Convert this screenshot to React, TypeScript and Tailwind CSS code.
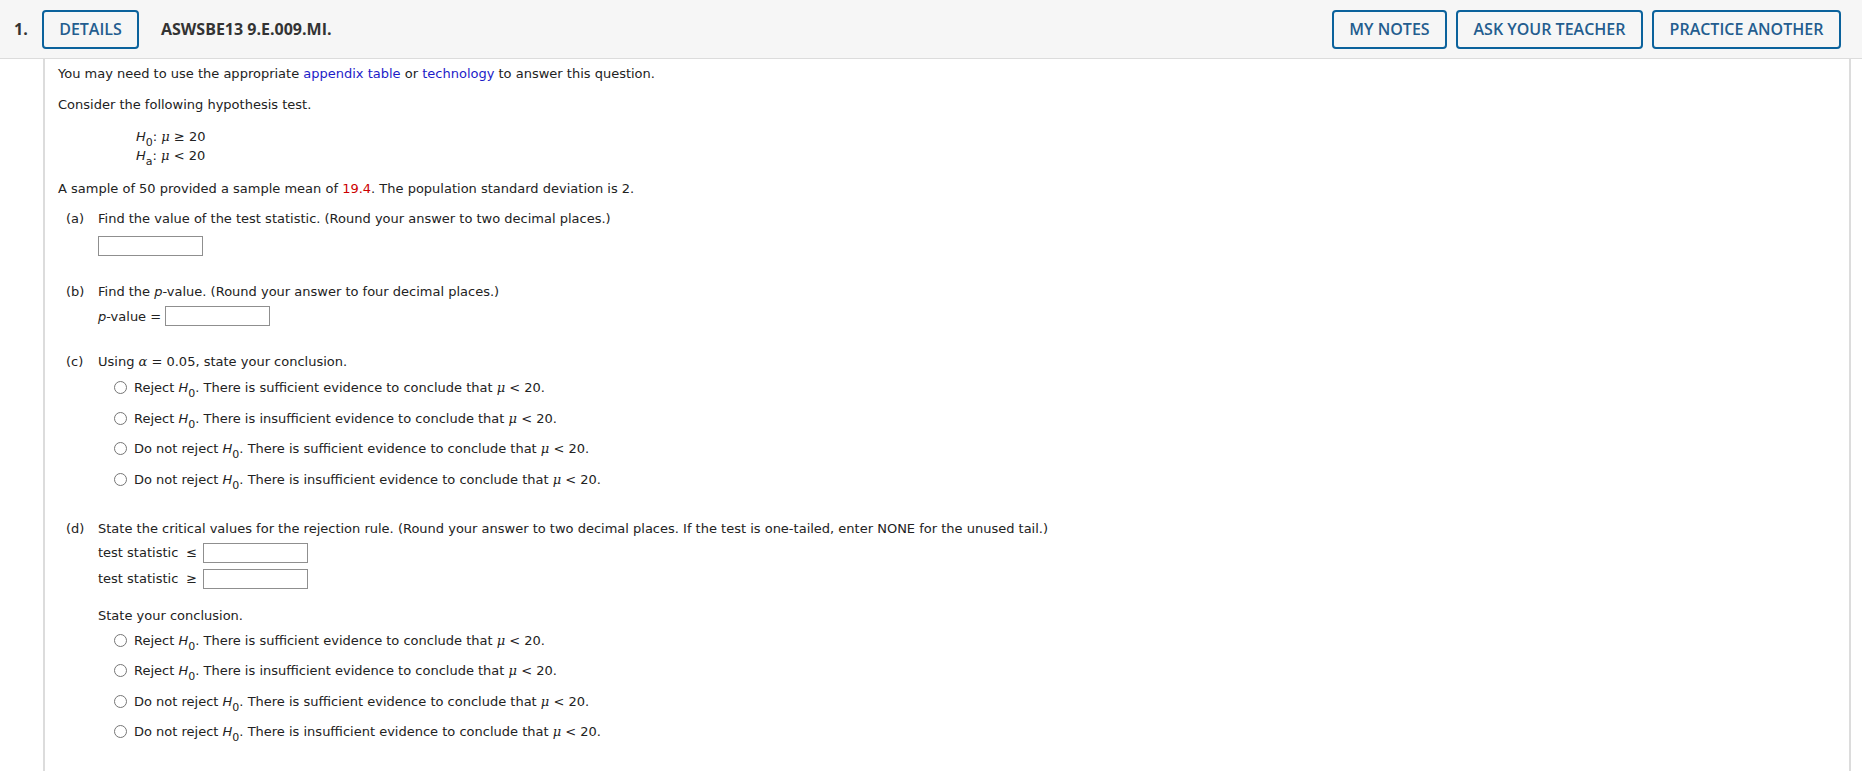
import React from 'react';

const H = ({ sub }: { sub: string }) => (
  <span>
    <span className="italic">H</span>
    <span className="relative top-[5px] text-[11px] leading-none">{sub}</span>
  </span>
);

const Mu = () => <span className="italic font-['DejaVu_Serif',serif]">μ</span>;

function Choice({ lead, rest }: { lead: string; rest: string }) {
  return (
    <label className="flex h-[19px] items-center">
      <span className="ml-[56px] mr-[7px] h-[13px] w-[13px] rounded-full border border-[#767676] bg-white" />
      <span>
        {lead} <H sub="0" />. {rest} <Mu /> &lt; 20.
      </span>
    </label>
  );
}

function Choices() {
  return (
    <div className="flex flex-col gap-[11.5px]">
      <Choice lead="Reject" rest="There is sufficient evidence to conclude that" />
      <Choice lead="Reject" rest="There is insufficient evidence to conclude that" />
      <Choice lead="Do not reject" rest="There is sufficient evidence to conclude that" />
      <Choice lead="Do not reject" rest="There is insufficient evidence to conclude that" />
    </div>
  );
}

const Box = () => <span className="inline-block h-[20px] w-[105px] border border-[#8f8f8f] bg-white align-middle" />;

const headBtn =
  "h-[39px] whitespace-nowrap rounded-[4px] border-2 border-[#0b629c] bg-[#f6f6f6] px-0 text-[16px] font-semibold text-[#245d8f]";

export default function App() {
  return (
    <div className="min-h-[771px] bg-white text-[#222]">
      {/* header bar */}
      <div className="flex h-[59px] items-center border-b border-[#dcdcdc] bg-[#f6f6f6] font-['Open_Sans',sans-serif]">
        <span className="ml-[14px] w-[28px] text-[16px] font-bold text-[#333]">1.</span>
        <button className="h-[39px] w-[97px] rounded-[4px] border-2 border-[#0b629c] text-[16px] font-semibold text-[#245d8f]">
          DETAILS
        </button>
        <span className="ml-[22px] text-[16px] font-bold text-[#333]">ASWSBE13 9.E.009.MI.</span>
        <div className="ml-auto mr-[21px] flex gap-[9px]">
          <button className={headBtn + " w-[115px]"}>MY NOTES</button>
          <button className={headBtn + " w-[187px]"}>ASK YOUR TEACHER</button>
          <button className={headBtn + " w-[189px]"}>PRACTICE ANOTHER</button>
        </div>
      </div>

      {/* question body */}
      <div className="ml-[43px] mr-[11px] min-h-[712px] border-x-2 border-[#dcdcdc] pl-[13px] pt-[5px] font-['DejaVu_Sans',Verdana,sans-serif] text-[13px] leading-[19px]">
        <p>
          You may need to use the appropriate <span className="text-[#1c1cc8]">appendix table</span> or{' '}
          <span className="text-[#1c1cc8]">technology</span> to answer this question.
        </p>
        <p className="mt-[12px]">Consider the following hypothesis test.</p>
        <div className="mt-[13px] ml-[78px]">
          <p>
            <H sub="0" />: <Mu /> ≥ 20
          </p>
          <p>
            <H sub="a" />: <Mu /> &lt; 20
          </p>
        </div>
        <p className="mt-[14px]">
          A sample of 50 provided a sample mean of <span className="text-[#cc0000]">19.4</span>. The population standard
          deviation is 2.
        </p>

        {/* (a) */}
        <div className="mt-[11px] ml-[8px] flex">
          <span className="w-[32px]">(a)</span>
          <span>Find the value of the test statistic. (Round your answer to two decimal places.)</span>
        </div>
        <div className="mt-[7px] ml-[40px] h-[20px]">
          <Box />
        </div>

        {/* (b) */}
        <div className="mt-[27px] ml-[8px] flex">
          <span className="w-[32px]">(b)</span>
          <span>
            Find the <span className="italic">p</span>-value. (Round your answer to four decimal places.)
          </span>
        </div>
        <div className="mt-[5px] ml-[40px] flex h-[20px] items-center">
          <span>
            <span className="italic">p</span>-value =&nbsp;
          </span>
          <Box />
        </div>

        {/* (c) */}
        <div className="mt-[26px] ml-[8px] flex">
          <span className="w-[32px]">(c)</span>
          <span>
            Using <span className="italic font-['DejaVu_Serif',serif]">α</span> = 0.05, state your conclusion.
          </span>
        </div>
        <div className="mt-[7px]">
          <Choices />
        </div>

        {/* (d) */}
        <div className="mt-[30px] ml-[8px] flex">
          <span className="w-[32px]">(d)</span>
          <span>
            State the critical values for the rejection rule. (Round your answer to two decimal places. If the test is
            one-tailed, enter NONE for the unused tail.)
          </span>
        </div>
        <div className="mt-[5px] ml-[40px] flex flex-col gap-[6px]">
          <div className="flex h-[20px] items-center">
            <span>test statistic</span>
            <span className="ml-[8px] mr-[6px]">≤</span>
            <Box />
          </div>
          <div className="flex h-[20px] items-center">
            <span>test statistic</span>
            <span className="ml-[8px] mr-[6px]">≥</span>
            <Box />
          </div>
        </div>
        <p className="mt-[17px] ml-[40px]">State your conclusion.</p>
        <div className="mt-[6px]">
          <Choices />
        </div>
      </div>
    </div>
  );
}
